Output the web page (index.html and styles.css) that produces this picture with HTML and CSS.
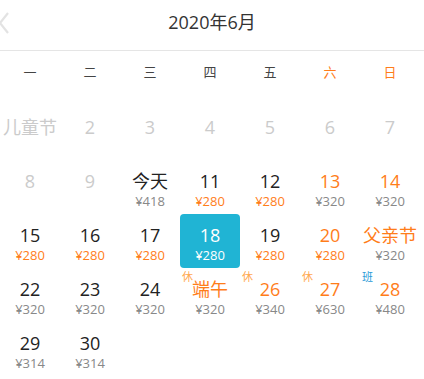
FILE: index.html
```html
<!DOCTYPE html>
<html lang="zh">
<head>
<meta charset="utf-8">
<link rel="stylesheet" href="styles.css">
</head>
<body>
<div class="header">
  <svg class="back" width="10" height="22" viewBox="0 0 10 22"><polyline points="9,1 1,11 9,21" fill="none" stroke="#e3e3e3" stroke-width="2.2"/></svg>
  <div class="title">2020年6月</div>
</div>
<div class="weekdays">
  <span>一</span><span>二</span><span>三</span><span>四</span><span>五</span><span class="wk">六</span><span class="wk">日</span>
</div>
<div class="grid">
  <div class="cell off"><div class="d">儿童节</div></div>
  <div class="cell off"><div class="d">2</div></div>
  <div class="cell off"><div class="d">3</div></div>
  <div class="cell off"><div class="d">4</div></div>
  <div class="cell off"><div class="d">5</div></div>
  <div class="cell off"><div class="d">6</div></div>
  <div class="cell off"><div class="d">7</div></div>

  <div class="cell off"><div class="d">8</div></div>
  <div class="cell off"><div class="d">9</div></div>
  <div class="cell"><div class="d">今天</div><div class="p">¥418</div></div>
  <div class="cell"><div class="d">11</div><div class="p low">¥280</div></div>
  <div class="cell"><div class="d">12</div><div class="p low">¥280</div></div>
  <div class="cell"><div class="d hol">13</div><div class="p">¥320</div></div>
  <div class="cell"><div class="d hol">14</div><div class="p">¥320</div></div>

  <div class="cell"><div class="d">15</div><div class="p low">¥280</div></div>
  <div class="cell"><div class="d">16</div><div class="p low">¥280</div></div>
  <div class="cell"><div class="d">17</div><div class="p low">¥280</div></div>
  <div class="cell sel"><div class="d">18</div><div class="p">¥280</div></div>
  <div class="cell"><div class="d">19</div><div class="p low">¥280</div></div>
  <div class="cell"><div class="d hol">20</div><div class="p low">¥280</div></div>
  <div class="cell"><div class="d hol">父亲节</div><div class="p">¥320</div></div>

  <div class="cell"><div class="d">22</div><div class="p">¥320</div></div>
  <div class="cell"><div class="d">23</div><div class="p">¥320</div></div>
  <div class="cell"><div class="d">24</div><div class="p">¥320</div></div>
  <div class="cell"><span class="tag rest">休</span><div class="d hol">端午</div><div class="p">¥320</div></div>
  <div class="cell"><span class="tag rest">休</span><div class="d hol">26</div><div class="p">¥340</div></div>
  <div class="cell"><span class="tag rest">休</span><div class="d hol">27</div><div class="p">¥630</div></div>
  <div class="cell"><span class="tag work">班</span><div class="d hol">28</div><div class="p">¥480</div></div>

  <div class="cell"><div class="d">29</div><div class="p">¥314</div></div>
  <div class="cell"><div class="d">30</div><div class="p">¥314</div></div>
</div>
</body>
</html>
```
FILE: styles.css
```css
html, body {
  margin: 0;
  padding: 0;
  background: #fff;
}
body {
  font-family: "Open Sans", "Noto Sans CJK SC", sans-serif;
  color: #333;
  width: 424px;
  overflow: hidden;
}
.header {
  position: relative;
  height: 50px;
  border-bottom: 1px solid #e5e5e5;
  display: flex;
  align-items: center;
  justify-content: center;
}
.back {
  position: absolute;
  left: -1px;
  top: 12px;
}
.title {
  font-size: 18px;
  line-height: 22px;
  margin-top: -6px;
  color: #333;
}
.weekdays {
  display: grid;
  grid-template-columns: repeat(7, 60px);
  height: 40px;
  align-items: center;
  font-size: 13px;
  font-family: "Noto Sans CJK SC", sans-serif;
  margin-bottom: 15px;
}
.weekdays span {
  text-align: center;
  color: #444;
}
.weekdays .wk {
  color: #ff7d1a;
}
.grid {
  display: grid;
  grid-template-columns: repeat(7, 60px);
  grid-auto-rows: 54px;
}
.cell {
  position: relative;
  text-align: center;
  padding-top: 11px;
  box-sizing: border-box;
  border-radius: 4px;
}
.d {
  font-size: 18px;
  line-height: 21px;
  color: #222;
  white-space: nowrap;
}
.p {
  font-size: 13px;
  line-height: 18px;
  color: #888;
}
.off .d {
  color: #cbcbcb;
}
.d.hol {
  color: #ff7d1a;
}
.p.low {
  color: #ff7d1a;
}
.sel {
  background: #20b4d4;
}
.sel .d, .sel .p {
  color: #fff;
}
.tag {
  position: absolute;
  left: 2px;
  top: 1px;
  font-size: 11px;
  line-height: 14px;
  font-family: "Noto Sans CJK SC", sans-serif;
}
.tag.rest {
  color: #ffa850;
}
.tag.work {
  color: #2a9ad8;
}
```
